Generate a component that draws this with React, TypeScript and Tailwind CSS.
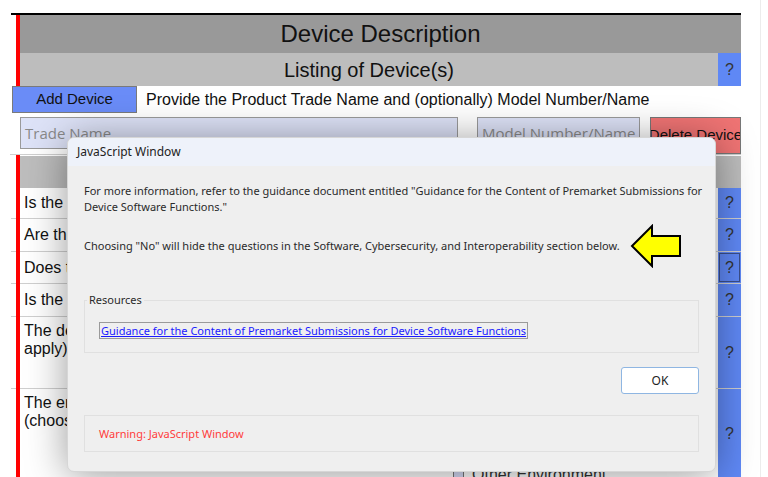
import React from 'react'

const arial = { fontFamily: '"Liberation Sans", Arial, sans-serif' }
const ui = { fontFamily: '"Noto Sans", "Open Sans", sans-serif' }

function Help({ focused = false }: { focused?: boolean }) {
  return (
    <div
      className={`w-[23px] shrink-0 self-stretch flex items-center justify-center bg-[#5f88f5] text-[16px] text-[#333] ${
        focused ? 'outline outline-1 outline-[#3b4f8a] -outline-offset-2' : ''
      }`}
    >
      ?
    </div>
  )
}

function Row({
  h,
  children,
  focused,
  top = false,
}: {
  h: string
  children: React.ReactNode
  focused?: boolean
  top?: boolean
}) {
  return (
    <div className={`flex ${h}`}>
      <div className="w-[5px] border-b border-[#cfcfcf]" />
      <div className="w-[4px] bg-[#ff0000]" />
      <div className="flex-1 flex border-b border-[#cfcfcf] bg-white min-w-0">
        <div
          className={`flex-1 min-w-0 overflow-hidden pl-[4px] text-[16px] leading-[18px] text-[#111] ${
            top ? 'pt-[5px]' : 'flex items-center whitespace-nowrap'
          }`}
        >
          {children}
        </div>
        <Help focused={focused} />
      </div>
    </div>
  )
}

function YellowArrow() {
  return (
    <svg width="52" height="44" viewBox="0 0 52 44" className="absolute left-[630px] top-[224px]">
      <polygon
        points="2,22 22,2 22,12 50,12 50,32 22,32 22,42"
        fill="#ffff00"
        stroke="#000"
        strokeWidth="2"
        strokeLinejoin="miter"
      />
    </svg>
  )
}

export default function App() {
  return (
    <div className="relative w-[768px] h-[477px] overflow-hidden bg-white" style={arial}>
      <div className="flex h-full">
        <div className="w-[760px] pl-[11px] pt-[13px]">
          <div className="w-[730px]">
            {/* header bands */}
            <div className="h-[2px] bg-black" />
            <div className="ml-[5px] border-l-4 border-[#ff0000]">
              <div className="h-[38px] bg-[#999999] flex items-center justify-center text-[24px] text-[#111]">
                Device Description
              </div>
              <div className="h-[33px] bg-[#bdbdbd] flex">
                <div className="flex-1 flex items-center justify-center text-[20px] text-[#111]">
                  Listing of Device(s)
                </div>
                <Help />
              </div>
            </div>

            {/* add device */}
            <div className="flex items-center h-[27px]">
              <button className="ml-[1px] w-[125px] h-[27px] bg-[#6a8cf7] border border-[#7a7a7a] text-[15px] text-[#111]">
                Add Device
              </button>
              <span className="ml-[9px] text-[16px] text-[#111]">
                Provide the Product Trade Name and (optionally) Model Number/Name
              </span>
            </div>

            {/* names */}
            <div className="flex items-start h-[38px] mt-[4px] border-b border-[#cfcfcf] ml-[-1px]">
              <div
                className="ml-[10px] w-[438px] h-[32px] bg-[#dde2f7] border border-[#9a9a9a] pl-[4px] flex items-center text-[15px] text-[#8a8a8a]"
                style={{ fontFamily: '"Open Sans", sans-serif' }}
              >
                Trade Name
              </div>
              <div
                className="ml-[19px] w-[163px] h-[32px] bg-[#dde2f7] border border-[#9a9a9a] pl-[4px] flex items-center text-[15px] text-[#8a8a8a] whitespace-nowrap overflow-hidden"
                style={{ fontFamily: '"Open Sans", sans-serif' }}
              >
                Model Number/Name
              </div>
              <div className="ml-[10px] w-[91px] h-[37px] bg-[#f07474] border border-[#777] flex items-center justify-center text-[15px] text-[#111] whitespace-nowrap overflow-hidden">
                Delete Device
              </div>
            </div>

            {/* section */}
            <div className="flex h-[33px]">
              <div className="w-[5px]" />
              <div className="w-[4px] bg-[#ff0000]" />
              <div className="flex-1 bg-[#bdbdbd] mt-[1px]" />
            </div>
            <Row h="h-[31px]">Is the device intended to be used as software?</Row>
            <Row h="h-[33px]">Are there any software functions in the device?</Row>
            <Row h="h-[32px]" focused>
              Does the device connect to a network?
            </Row>
            <Row h="h-[33px]">Is the device a combination product?</Row>
            <Row h="h-[72px]" top>
              The device is intended for use in which setting(s)? (choose all that
              <br />
              apply)
            </Row>
            <div className="flex h-[90px]">
              <div className="w-[5px]" />
              <div className="w-[4px] bg-[#ff0000]" />
              <div className="flex-1 flex bg-white min-w-0">
                <div className="flex-1 min-w-0 overflow-hidden pl-[4px] pt-[5px] text-[16px] leading-[18px] text-[#111]">
                  <div className="whitespace-nowrap">The environment of use for the device is</div>
                  <div className="whitespace-nowrap">(choose all that apply)</div>
                  <div className="ml-[429px] mt-[36px] flex items-center gap-[8px] text-[#333]">
                    <span className="w-[11px] h-[11px] bg-[#d5dbf5] border border-[#777]" />
                    <span>Other Environment</span>
                  </div>
                </div>
                <Help />
              </div>
            </div>
          </div>
        </div>
        <div className="flex-1 border-l border-[#ececec] bg-white" />
      </div>

      {/* dialog */}
      <div
        className="absolute left-[67px] top-[137px] w-[649px] h-[335px] rounded-[7px] bg-[#efefef] border border-[#d6d6d6] shadow-[0_3px_40px_rgba(0,0,0,0.4)] overflow-hidden"
        style={ui}
      >
        <div className="h-[28px] bg-[#eef2fa] pl-[9px] flex items-center text-[12px] text-[#222]">
          JavaScript Window
        </div>
        <div className="px-[16px] pt-[17px] text-[11px] leading-[16px] text-[#2a2a2a]">
          <p className="whitespace-nowrap">
            For more information, refer to the guidance document entitled "Guidance for the Content of Premarket
            Submissions for
            <br />
            Device Software Functions."
          </p>
          <p className="mt-[23px] whitespace-nowrap">
            Choosing "No" will hide the questions in the Software, Cybersecurity, and Interoperability section below.
          </p>
          <fieldset className="mt-[38px] h-[61px] border border-[#e0e0e0] pl-[14px] pr-2">
            <legend className="ml-[-12px] px-[2px] text-[11px] text-[#2a2a2a]">Resources</legend>
            <div className="mt-[14px]">
              <span className="inline-block border border-[#9a9a9a] px-[1px] leading-[15px] text-[#1a1aff] underline">
                Guidance for the Content of Premarket Submissions for Device Software Functions
              </span>
            </div>
          </fieldset>
          <div className="flex justify-end mt-[14px]">
            <button className="w-[78px] h-[27px] bg-white border border-[#8fb6e2] rounded-[3px] text-[12px] text-[#222]">
              OK
            </button>
          </div>
          <div className="mt-[21px] h-[37px] border border-[#e0e0e0] pl-[14px] flex items-center text-[11px] text-[#ff3b3b]">
            Warning: JavaScript Window
          </div>
        </div>
      </div>

      <YellowArrow />
    </div>
  )
}
